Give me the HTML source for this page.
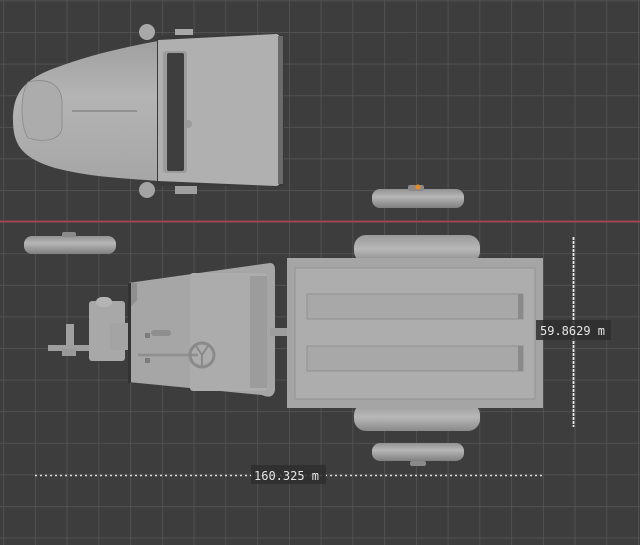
<!DOCTYPE html>
<html><head><meta charset="utf-8"><style>
html,body{margin:0;padding:0;background:#3d3d3d;width:640px;height:545px;overflow:hidden}
svg{display:block}
.lbl{font-family:"DejaVu Sans Mono","Liberation Mono",monospace;font-size:12px;fill:#e6e6e6}
</style></head><body>
<svg width="640" height="545" viewBox="0 0 640 545" xmlns="http://www.w3.org/2000/svg">
<defs>
<pattern id="g" x="3.2" y="0.5" width="31.75" height="31.6" patternUnits="userSpaceOnUse">
<path d="M0 0V31.6M0 0H31.75" stroke="#575757" stroke-width="1.4" fill="none"/>
</pattern>
<linearGradient id="hood" x1="0" y1="0" x2="0" y2="1">
<stop offset="0" stop-color="#a0a0a0"/><stop offset="0.4" stop-color="#b4b4b4"/><stop offset="1" stop-color="#a6a6a6"/></linearGradient>
<linearGradient id="tire" x1="0" y1="0" x2="0" y2="1">
<stop offset="0" stop-color="#929292"/><stop offset="0.4" stop-color="#b6b6b6"/><stop offset="1" stop-color="#808080"/></linearGradient>
<linearGradient id="bw" x1="0" y1="0" x2="0" y2="1">
<stop offset="0" stop-color="#9a9a9a"/><stop offset="0.5" stop-color="#b8b8b8"/><stop offset="1" stop-color="#8a8a8a"/></linearGradient>
</defs>
<rect width="640" height="545" fill="#3d3d3d"/>
<rect width="640" height="545" fill="url(#g)"/>
<line x1="0" y1="221.5" x2="640" y2="221.5" stroke="#a4454f" stroke-width="1.8"/>

<!-- car top -->
<circle cx="147" cy="32" r="8" fill="#a8a8a8"/>
<circle cx="147" cy="190" r="8" fill="#a4a4a4"/>
<rect x="175" y="29" width="18" height="6" fill="#a8a8a8"/>
<rect x="175" y="184" width="22" height="10" fill="#a0a0a0"/>
<path d="M158 41 C120 48 90 55 55 68 C22 80 13 95 13 120 C13 145 22 158 55 168 C90 177 120 178 158 181 Z" fill="url(#hood)"/>
<path d="M28 82 C45 78 60 82 62 100 L62 128 C60 140 45 143 28 138 C20 125 20 95 28 82 Z" fill="#acacac" stroke="#8a8a8a" stroke-width="0.8"/>
<line x1="72" y1="111" x2="137" y2="111" stroke="#888" stroke-width="1.5"/>
<rect x="157" y="35" width="127" height="151" rx="4" fill="#3a3a3a"/>
<path d="M158 40 L276 34 Q280 34 280 40 L280 180 Q280 186 276 186 L158 181 Z" fill="#b0b0b0"/>
<rect x="278" y="36" width="5" height="148" fill="#6a6a6a"/>
<rect x="163" y="51" width="24" height="122" rx="3" fill="#9c9c9c"/>
<rect x="167" y="53" width="17" height="118" rx="2" fill="#3e3e3e"/>
<circle cx="188" cy="124" r="4" fill="#9a9a9a"/>

<!-- spare wheels -->
<rect x="372" y="189" width="92" height="19" rx="8" fill="url(#tire)"/>
<rect x="408" y="185" width="16" height="6" rx="2" fill="#8a8a8a"/>
<circle cx="418" cy="187" r="2.5" fill="#f08c1e"/>
<rect x="24" y="236" width="92" height="18" rx="8" fill="url(#tire)"/>
<rect x="62" y="232" width="14" height="5" rx="2" fill="#8a8a8a"/>
<rect x="372" y="443" width="92" height="18" rx="8" fill="url(#tire)"/>
<rect x="410" y="461" width="16" height="5" rx="2" fill="#8a8a8a"/>

<!-- big trailer wheels -->
<rect x="354" y="235" width="126" height="28" rx="12" fill="url(#bw)"/>
<rect x="354" y="403" width="126" height="28" rx="12" fill="url(#bw)"/>

<!-- tractor -->
<rect x="48" y="345" width="60" height="6" fill="#9e9e9e"/>
<rect x="66" y="324" width="8" height="24" fill="#a0a0a0"/>
<rect x="62" y="349" width="14" height="7" fill="#999"/>
<rect x="89" y="301" width="36" height="60" rx="3" fill="#a8a8a8"/>
<rect x="96" y="297" width="16" height="10" rx="6" fill="#b4b4b4"/>
<rect x="110" y="323" width="25" height="27" fill="#a4a4a4"/>
<path d="M128 283 L270 263 Q275 263 275 270 L275 390 Q273 400 262 395 L128 382 Z" fill="#a6a6a6"/>
<path d="M128 283 L137 283 L137 300 L128 310 Z" fill="#8f8f8f"/>
<rect x="128" y="283" width="3" height="100" fill="#333"/>
<rect x="190" y="273" width="77" height="118" rx="3" fill="#acacac"/>
<rect x="250" y="276" width="17" height="112" fill="#9c9c9c"/>
<rect x="270" y="328" width="18" height="8" fill="#9e9e9e"/>
<line x1="138" y1="355" x2="198" y2="355" stroke="#8e8e8e" stroke-width="2.5"/>
<rect x="145" y="333" width="5" height="5" fill="#7c7c7c"/>
<rect x="145" y="358" width="5" height="5" fill="#7c7c7c"/>
<rect x="151" y="330" width="20" height="6" rx="3" fill="#8e8e8e"/>
<circle cx="202" cy="355" r="12" fill="none" stroke="#8a8a8a" stroke-width="3"/>
<path d="M202 355 L196 346 M202 355 L208 346 M202 355 L202 366" stroke="#8a8a8a" stroke-width="2"/>

<!-- trailer -->
<rect x="287" y="258" width="256" height="150" fill="#a5a5a5"/>
<rect x="295" y="268" width="240" height="131" fill="#adadad" stroke="#939393" stroke-width="1"/>
<rect x="307" y="294" width="216" height="25" fill="#a8a8a8" stroke="#8a8a8a" stroke-width="0.8"/>
<rect x="518" y="294" width="5" height="25" fill="#8a8a8a"/>
<rect x="307" y="346" width="216" height="25" fill="#a8a8a8" stroke="#8a8a8a" stroke-width="0.8"/>
<rect x="518" y="346" width="5" height="25" fill="#8a8a8a"/>

<!-- dimensions -->
<line x1="573.5" y1="237" x2="573.5" y2="427" stroke="#e8e8e8" stroke-width="1.8" stroke-dasharray="3 1"/>
<line x1="35" y1="475.5" x2="542" y2="475.5" stroke="#ddd" stroke-width="1.5" stroke-dasharray="2 3"/>
<rect x="536" y="320" width="75" height="20" fill="#2e2e2e" opacity="0.85"/>
<text class="lbl" x="540" y="335">59.8629 m</text>
<rect x="251" y="465" width="75" height="19" fill="#2e2e2e" opacity="0.85"/>
<text class="lbl" x="254" y="480">160.325 m</text>
</svg>
</body></html>
